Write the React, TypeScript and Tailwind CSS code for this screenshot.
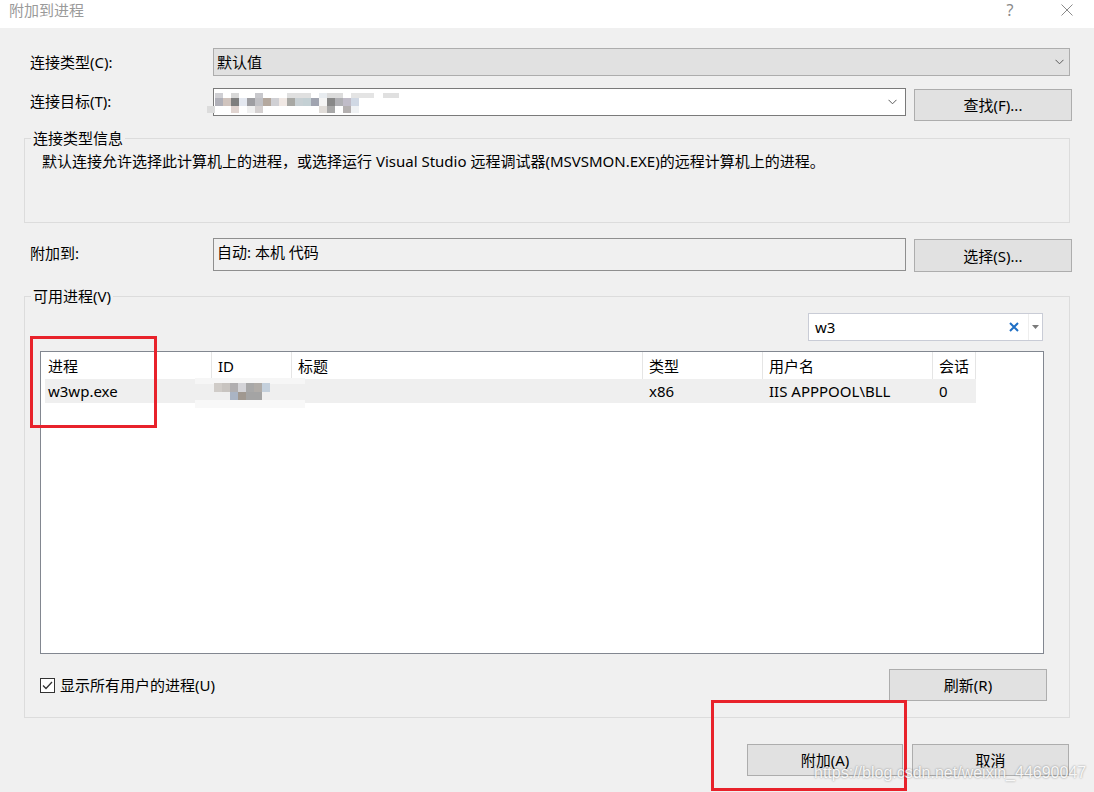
import React from "react";

// ── Data ─────────────────────────────────────────────────────────────

const columns = [
  { title: "进程", cls: "w-[171px] pl-[7px]" },
  { title: "ID", cls: "w-[80px] pl-[6px]" },
  { title: "标题", cls: "w-[351px] pl-[6px]" },
  { title: "类型", cls: "w-[120px] pl-[6px]" },
  { title: "用户名", cls: "w-[170px] pl-[6px]" },
  { title: "会话", cls: "w-[43px] pl-[6px]" },
];

const rowCells = [
  { text: "w3wp.exe", cls: "w-[167px] pl-[3px]" },
  { text: "", cls: "w-[80px] pl-[6px]" },
  { text: "", cls: "w-[351px] pl-[6px]" },
  { text: "x86", cls: "w-[120px] pl-[6px]" },
  { text: "IIS APPPOOL\\BLL", cls: "w-[170px] pl-[6px]" },
  { text: "0", cls: "w-[43px] pl-[6px]" },
];

// pixelated blur blocks: [x, y, w, h, colour]
const targetMosaic: [number, number, number, number, string][] = [
  [8, 3, 8, 5, "#cfcfd3"],
  [24, 3, 8, 5, "#d8d8d8"],
  [48, 3, 8, 5, "#c8c8cc"],
  [80, 3, 24, 5, "#e0e0e0"],
  [112, 3, 8, 5, "#e8ecf0"],
  [120, 3, 16, 5, "#dcdcdc"],
  [144, 3, 23, 5, "#e4e4e4"],
  [176, 3, 16, 5, "#e0e0e0"],
  [8, 8, 8, 8, "#b0b0b8"],
  [16, 8, 8, 8, "#d0c4be"],
  [24, 8, 8, 8, "#7e7e7e"],
  [32, 8, 8, 8, "#e4e8f0"],
  [40, 8, 8, 8, "#9e9ea2"],
  [48, 8, 8, 8, "#c0c0c4"],
  [56, 8, 8, 8, "#b4a89e"],
  [64, 8, 8, 8, "#d0d0d4"],
  [72, 8, 8, 8, "#f0e8e4"],
  [80, 8, 8, 8, "#a8a8a4"],
  [88, 8, 8, 8, "#c8d0d4"],
  [96, 8, 8, 8, "#c4d0d4"],
  [104, 8, 8, 8, "#a0a4b0"],
  [112, 8, 8, 8, "#f4f4f4"],
  [120, 8, 8, 8, "#888888"],
  [128, 8, 8, 8, "#b0b0b4"],
  [136, 8, 8, 8, "#c0bcc8"],
  [144, 8, 8, 8, "#d0d8e4"],
  [0, 16, 8, 7, "#dcdcdc"],
  [24, 16, 8, 7, "#e0d4d0"],
  [40, 16, 8, 7, "#f0f0f0"],
  [48, 16, 8, 7, "#d4d0d0"],
  [112, 16, 8, 7, "#e0dcd8"],
  [120, 16, 8, 7, "#a8a8a8"],
  [136, 16, 8, 7, "#b4b0b0"],
  [144, 16, 8, 7, "#f0f2f4"],
];

const idMosaic: [number, number, number, number, string][] = [
  [0, 0, 110, 6, "#f6f6f6"],
  [19, 5, 8, 9, "#d0ccc8"],
  [27, 5, 8, 9, "#c8c4c0"],
  [35, 5, 8, 9, "#b0aeb0"],
  [43, 5, 8, 9, "#d4d4d8"],
  [51, 5, 8, 9, "#a8a8a8"],
  [59, 5, 8, 9, "#b0aca8"],
  [67, 5, 8, 9, "#c4d0dc"],
  [35, 14, 8, 8, "#aab4c4"],
  [43, 14, 8, 8, "#a09890"],
  [51, 14, 16, 8, "#a4a4a4"],
  [0, 22, 110, 8, "#f8f8f8"],
];

// ── Small drawings ───────────────────────────────────────────────────

function Chevron() {
  return (
    <svg width="9" height="6" viewBox="0 0 9 6" className="shrink-0">
      <polyline points="0.5,0.8 4.5,4.8 8.5,0.8" fill="none" stroke="#5a5a5a" strokeWidth="1" />
    </svg>
  );
}

function Mosaic({ blocks, w, h }: { blocks: [number, number, number, number, string][]; w: number; h: number }) {
  return (
    <svg width={w} height={h} viewBox={`0 0 ${w} ${h}`}>
      {blocks.map(([x, y, bw, bh, c], i) => (
        <rect key={i} x={x} y={y} width={bw} height={bh} fill={c} />
      ))}
    </svg>
  );
}

function Button({ label, cls }: { label: string; cls: string }) {
  return (
    <div
      className={`flex shrink-0 items-center justify-center border border-[#adadad] bg-[#e1e1e1] text-[15px] leading-[20px] text-black ${cls}`}
    >
      {label}
    </div>
  );
}

// ── Component ────────────────────────────────────────────────────────

export default function App() {
  return (
    <div className="relative flex h-[792px] w-[1094px] flex-col overflow-hidden bg-[#f0f0f0] font-['Noto_Sans','Noto_Sans_CJK_SC',sans-serif] text-[15px] leading-[20px] text-black">
      {/* Title bar */}
      <div className="flex h-[28px] shrink-0 items-start bg-white pl-[9px] pr-[21px]">
        <span className="text-[15px] leading-[20px] text-[#9a9a9a]">附加到进程</span>
        <span className="ml-auto mr-[41px] w-[20px] text-center text-[16px] leading-[20px] text-[#8a8a8a]">?</span>
        <svg width="12" height="12" viewBox="0 0 12 12" className="mt-[4px]">
          <path d="M0.5 0.5 L11.5 11.5 M11.5 0.5 L0.5 11.5" stroke="#8a8a8a" strokeWidth="1" />
        </svg>
      </div>

      {/* 连接类型 */}
      <div className="ml-[30px] mt-[20px] flex items-center">
        <span className="w-[183px] shrink-0">连接类型(C):</span>
        <div className="flex h-[28px] w-[857px] items-center border border-[#adadad] bg-[#e1e1e1] pl-[3px] pr-[5px]">
          <span className="flex-1">默认值</span>
          <Chevron />
        </div>
      </div>

      {/* 连接目标 */}
      <div className="ml-[30px] mt-[12px] flex items-start">
        <span className="mt-[3px] w-[183px] shrink-0">连接目标(T):</span>
        <div className="relative flex h-[28px] w-[693px] items-center justify-end border border-[#7a7a7a] bg-white pr-[8px]">
          <div className="absolute left-[-7px] top-[1px]">
            <Mosaic blocks={targetMosaic} w={196} h={24} />
          </div>
          <Chevron />
        </div>
        <Button label="查找(F)..." cls="ml-[8px] mt-[1px] h-[32px] w-[158px]" />
      </div>

      {/* 连接类型信息 */}
      <fieldset className="ml-[24px] mt-[7px] h-[95px] w-[1046px] border border-[#dcdcdc]">
        <legend className="ml-[6px] px-[2px] leading-[20px]">连接类型信息</legend>
        <p className="pl-[17px] pt-[3px]">
          默认连接允许选择此计算机上的进程，或选择运行 Visual Studio 远程调试器(MSVSMON.EXE)的远程计算机上的进程。
        </p>
      </fieldset>

      {/* 附加到 */}
      <div className="ml-[30px] mt-[15px] flex items-start">
        <span className="mt-[5px] w-[183px] shrink-0">附加到:</span>
        <div className="h-[33px] w-[693px] border border-[#8f8f8f] bg-[#f0f0f0] pl-[3px] pt-[3px]">
          自动: 本机 代码
        </div>
        <Button label="选择(S)..." cls="ml-[8px] mt-[1px] h-[33px] w-[158px]" />
      </div>

      {/* 可用进程 */}
      <fieldset className="ml-[24px] mt-[14px] flex h-[432px] w-[1046px] flex-col border border-[#dcdcdc]">
        <legend className="ml-[6px] px-[2px] leading-[20px]">可用进程(V)</legend>

        <div className="mt-[7px] flex justify-end pr-[26px]">
          <div className="flex h-[28px] w-[235px] items-center border border-[#c9ccd6] bg-white pl-[6px]">
            <span className="flex-1">w3</span>
            <svg width="10" height="10" viewBox="0 0 10 10" className="mr-[9px]">
              <path d="M1 1 L9 9 M9 1 L1 9" stroke="#1f6fc5" strokeWidth="2" />
            </svg>
            <div className="flex h-full w-[14px] items-center justify-center border-l border-[#eeeeee]">
              <svg width="7" height="4" viewBox="0 0 7 4">
                <path d="M0 0 L7 0 L3.5 4 Z" fill="#7a7a7a" />
              </svg>
            </div>
          </div>
        </div>

        {/* Process list */}
        <div className="ml-[15px] mt-[10px] h-[303px] w-[1004px] border border-[#828790] bg-white">
          <div className="flex h-[27px]">
            {columns.map((c) => (
              <div key={c.title} className={`flex shrink-0 items-center border-r border-[#e5e5e5] ${c.cls}`}>
                {c.title}
              </div>
            ))}
          </div>
          <div className="relative ml-[4px] flex h-[24px] w-[931px] bg-[#efefef]">
            {rowCells.map((c, i) => (
              <div key={i} className={`flex shrink-0 items-center ${c.cls}`}>
                {c.text}
              </div>
            ))}
            <div className="absolute left-[150px] top-[-1px]">
              <Mosaic blocks={idMosaic} w={110} h={30} />
            </div>
          </div>
        </div>

        <div className="mt-[15px] flex h-[32px] items-center">
          <div className="ml-[15px] flex h-[15px] w-[15px] items-center justify-center border border-[#333333] bg-white">
            <svg width="11" height="9" viewBox="0 0 11 9">
              <polyline points="1,4.5 4,7.5 10,1" fill="none" stroke="#333333" strokeWidth="1.3" />
            </svg>
          </div>
          <span className="ml-[5px]">显示所有用户的进程(U)</span>
          <Button label="刷新(R)" cls="ml-auto mr-[22px] h-[32px] w-[158px]" />
        </div>
      </fieldset>

      {/* Dialog buttons */}
      <div className="mt-[26px] flex justify-end gap-[9px] pr-[25px]">
        <Button label="附加(A)" cls="h-[32px] w-[156px]" />
        <Button label="取消" cls="h-[32px] w-[157px]" />
      </div>

      {/* Annotations */}
      <div className="absolute left-[30px] top-[336px] h-[92px] w-[127px] border-[3px] border-[#e8222b]" />
      <div className="absolute left-[711px] top-[700px] h-[91px] w-[196px] border-[3px] border-[#e8222b]" />
      <div className="absolute left-[814px] top-[763px] font-['Liberation_Sans',sans-serif] text-[16px] leading-[19px] text-white/90 [text-shadow:0_0_2px_rgba(0,0,0,0.45)]">
        https://blog.csdn.net/weixin_44690047
      </div>
    </div>
  );
}
